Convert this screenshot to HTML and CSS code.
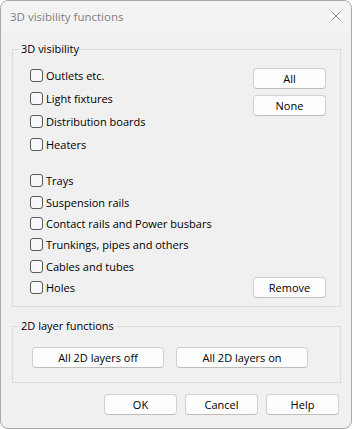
FILE: index.html
```html
<!DOCTYPE html>
<html>
<head>
<meta charset="utf-8">
<link rel="stylesheet" href="styles.css">
</head>
<body>
<div class="window">
  <div class="titlebar">
    <span class="title">3D visibility functions</span>
    <svg class="close" width="10" height="10" viewBox="0 0 10 10"><path d="M0.5 0.5 L9.5 9.5 M9.5 0.5 L0.5 9.5" stroke="#8a8a8a" stroke-width="1" fill="none"/></svg>
  </div>
  <div class="content">
    <fieldset class="group g1">
      <legend>3D visibility</legend>
      <div class="g1body">
        <div class="checks">
          <div class="set set1">
            <label class="row"><span class="cb"></span><span>Outlets etc.</span></label>
            <label class="row"><span class="cb"></span><span>Light fixtures</span></label>
            <label class="row"><span class="cb"></span><span>Distribution boards</span></label>
            <label class="row"><span class="cb"></span><span>Heaters</span></label>
          </div>
          <div class="set set2">
            <label class="row"><span class="cb"></span><span>Trays</span></label>
            <label class="row"><span class="cb"></span><span>Suspension rails</span></label>
            <label class="row"><span class="cb"></span><span>Contact rails and Power busbars</span></label>
            <label class="row"><span class="cb"></span><span>Trunkings, pipes and others</span></label>
            <label class="row"><span class="cb"></span><span>Cables and tubes</span></label>
            <label class="row"><span class="cb"></span><span>Holes</span></label>
          </div>
        </div>
        <div class="side">
          <div class="btn">All</div>
          <div class="btn btn-none">None</div>
          <div class="btn btn-remove">Remove</div>
        </div>
      </div>
    </fieldset>
    <fieldset class="group g2">
      <legend>2D layer functions</legend>
      <div class="g2body">
        <div class="btn wide">All 2D layers off</div>
        <div class="btn wide">All 2D layers on</div>
      </div>
    </fieldset>
    <div class="footer">
      <div class="btn">OK</div>
      <div class="btn">Cancel</div>
      <div class="btn">Help</div>
    </div>
  </div>
</div>
</body>
</html>
```
FILE: styles.css
```css
* { box-sizing: border-box; }
html, body { margin: 0; padding: 0; background: #ffffff; }
body {
  font-family: "Open Sans", "Noto Sans", sans-serif;
  font-size: 11px;
  color: #000;
}
.window {
  width: 352px;
  height: 429px;
  border: 1px solid #a9a9a9;
  border-radius: 8px;
  background: #f0f0f0;
  overflow: hidden;
}
.titlebar {
  height: 30px;
  background: #f3f3f3;
  display: flex;
  align-items: center;
  justify-content: space-between;
  padding-left: 9px;
  padding-right: 9px;
}
.title {
  color: #7f7f7f;
  font-size: 11.5px;
}
.close { display: block; margin-right: 1px; }
.content {
  padding: 10px 10px 0 11px;
}
.group {
  margin: 0;
  padding: 0;
  min-width: 0;
  border: 1px solid #dcdcdc;
}
.group legend {
  margin-left: 6px;
  padding: 0 2px;
  line-height: 16px;
  height: 16px;
}
.g1body {
  display: flex;
  justify-content: space-between;
  padding: 7px 14px 8px 17px;
}
.set1 .row { height: 23px; }
.set2 { margin-top: 14px; }
.set2 .row { height: 21.4px; }
.row {
  display: flex;
  align-items: center;
}
.cb {
  width: 13px;
  height: 13px;
  border: 1px solid #5a5a5a;
  border-radius: 3px;
  background: #f8f8f8;
  margin-right: 3px;
  flex: none;
}
.side {
  display: flex;
  flex-direction: column;
  padding-top: 4px;
}
.btn {
  width: 73px;
  height: 21px;
  background: #fdfdfd;
  border: 1px solid #d0d0d0;
  border-bottom-color: #bdbdbd;
  border-radius: 4px;
  display: flex;
  align-items: center;
  justify-content: center;
  line-height: 1;
}
.btn-none { margin-top: 6px; }
.btn-remove { margin-top: auto; }
.g2 { margin-top: 11px; }
.g2body {
  display: flex;
  gap: 12px;
  padding: 13px 0 14px 19px;
}
.btn.wide { width: 132px; }
.footer {
  display: flex;
  justify-content: flex-end;
  gap: 8px;
  margin-top: 11px;
  margin-right: 2px;
}
```
